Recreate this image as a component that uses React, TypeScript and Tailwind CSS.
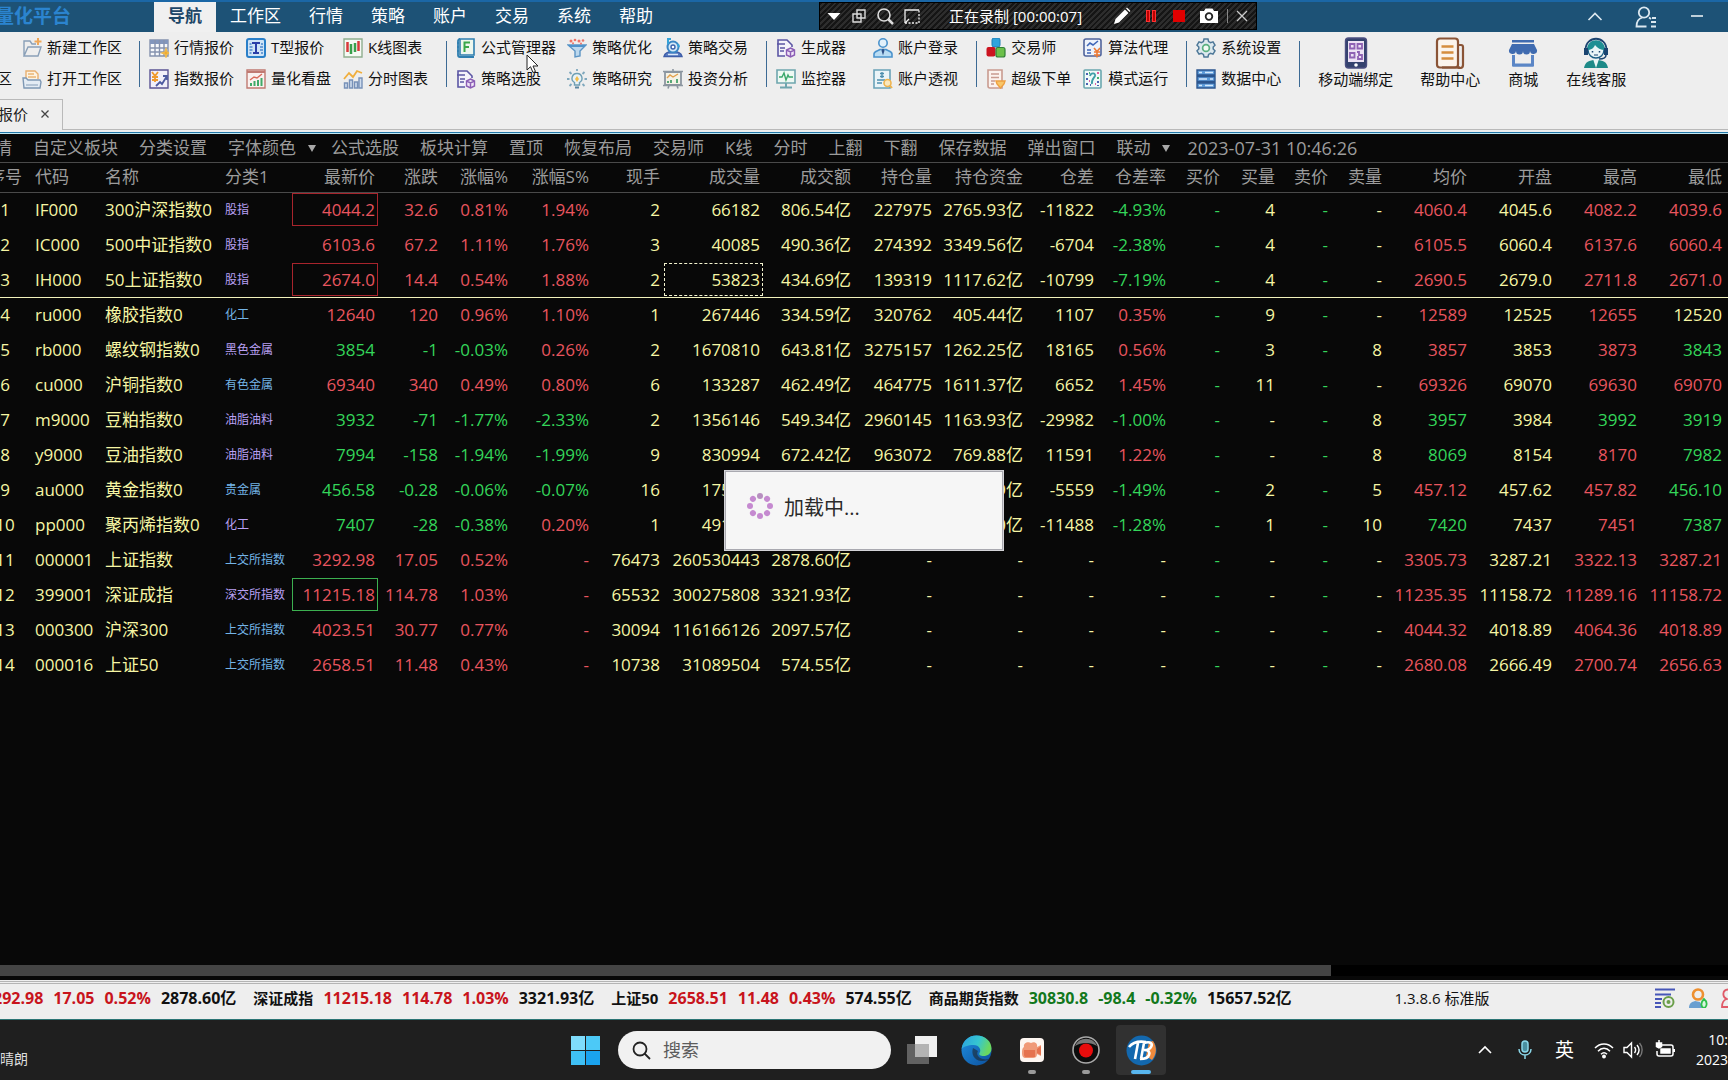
import type { ReactNode } from "react";

/* ---------- small drawings ---------- */

function Svg({ children, size = "h-5 w-5", box = "0 0 20 20" }: { children: ReactNode; size?: string; box?: string }) {
  return (
    <svg className={`${size} shrink-0`} viewBox={box} fill="none" strokeWidth={1.4} aria-hidden="true">
      {children}
    </svg>
  );
}

const icons: Record<string, ReactNode> = {
  newSpace: (
    <Svg>
      <path d="M2 18V3h6l2 3h4M2 18l4-9h13l-3 9z" stroke="#8aa0b8" />
      <path d="M16 0v7M12.500 3.500h7" stroke="#efa85a" strokeWidth={2} />
    </Svg>
  ),
  openSpace: (
    <Svg>
      <path d="M4 10V2h9l3 3v5" stroke="#e8b070" fill="#fdf3e2" />
      <path d="M6 5h6M6 8h8" stroke="#eab676" />
      <path d="M1 9h3l2 2h12l1 2-1 6H2z" stroke="#7e98b4" fill="#e4ecf4" />
      <path d="M4 16h12" stroke="#9fb3c8" />
    </Svg>
  ),
  quote: (
    <Svg>
      <path d="M1 2h18v16H1z" fill="#f7f9fc" stroke="#8592ae" />
      <path d="M1 2h18v4H1z" fill="#8296bd" />
      <path d="M1 10h18M1 14h18M6 2v16M10.500 2v16M15 2v16" stroke="#8592ae" />
      <path d="M17 11l1 3 2 1-2 1-1 3-1-3-3-1 3-1z" fill="#f0a422" stroke="#f0b94c" />
    </Svg>
  ),
  indexQuote: (
    <Svg>
      <path d="M1 1h18v18H1z" stroke="#5b5494" fill="#f1eff9" />
      <path d="M3 3l3 4 3-4M6 7v6M3 8h6M3 11h6" stroke="#f09a2c" strokeWidth={1.800} />
      <path d="M7 17l4-4 2 2 5-8M14 7h4v4" stroke="#4d5aa0" strokeWidth={1.800} />
    </Svg>
  ),
  tQuote: (
    <Svg>
      <rect x="1" y="1" width="18" height="18" rx="2" fill="#cfe3f6" stroke="#2a7fc8" strokeWidth={2} />
      <path d="M6 5h8M10 5v10M7 15h6" stroke="#2b3fa8" strokeWidth={2} />
      <path d="M3.500 6h2M3.500 9h3M3.500 12h3M3.500 15h2M14 9h3M14 12h3M15 6h2M15 15h2" stroke="#4e88cc" />
    </Svg>
  ),
  watch: (
    <Svg>
      <path d="M1 1h18v18H1z" stroke="#c07a72" fill="#f9f1ef" />
      <path d="M1 3h18" stroke="#c07a72" strokeWidth={2} />
      <path d="M5 17v-3M8.500 17v-5M12 17v-6M15.500 17V9" stroke="#3faa68" strokeWidth={2} />
      <path d="M4 11l4-3 3 1 5-4" stroke="#d96a5a" />
    </Svg>
  ),
  kline: (
    <Svg>
      <path d="M1 1h18v18H1z" stroke="#8fae8f" fill="#f6f9f4" />
      <path d="M4.500 4v10M15.500 3v10" stroke="#d8383a" strokeWidth={2.500} />
      <path d="M8 6v10M12 5v9" stroke="#39a04c" strokeWidth={2.500} />
    </Svg>
  ),
  timeChart: (
    <Svg>
      <path d="M1 10l5-6 4 4 4-6 5 2" stroke="#f0ae3c" strokeWidth={1.800} />
      <path d="M1.500 19v-5h3v5zM6.500 19v-8h3v8zM11.500 19v-6h3v6zM16 19V9h3v10z" fill="#cfdced" stroke="#7791b8" />
    </Svg>
  ),
  formula: (
    <Svg>
      <path d="M4 1h14v16H4z" fill="#eef7ee" stroke="#2f7fb0" strokeWidth={1.600} />
      <path d="M4 1a2 2 0 0 0-2 2v14a2 2 0 0 0 2 2h14" stroke="#2f7fb0" strokeWidth={1.800} />
      <path d="M1 5h2M1 9h2M1 13h2" stroke="#2f7fb0" />
      <path d="M8.500 14V4.500H14M8.500 9H13" stroke="#39a84b" strokeWidth={2} />
    </Svg>
  ),
  docCube: (
    <Svg>
      <path d="M9 18H2V2h9l5 5v2" stroke="#5b56a4" fill="#f3f2fa" strokeWidth={1.600} />
      <path d="M1 6h8M4 10h5M4 13h4" stroke="#5b56a4" />
      <path d="M14.500 10l4 2v5l-4 2-4-2v-5zM10.500 12l4 2 4-2M14.500 14v5" stroke="#8a5db5" fill="#efe4f7" />
    </Svg>
  ),
  funnel: (
    <Svg>
      <path d="M1 7h18l-6 6v5l-5 1v-6z" fill="#bcd8ee" stroke="#5c94c4" />
      <path d="M1 7h18l-2 2H3z" fill="#4f93cc" />
      <g fill="#ee7468">
        <circle cx="4" cy="3" r="1.500" /><circle cx="8" cy="2" r="1.300" /><circle cx="12" cy="3" r="1.500" />
        <circle cx="16" cy="2.500" r="1.300" /><circle cx="6" cy="5.300" r="1" /><circle cx="14" cy="5.500" r="1" />
      </g>
    </Svg>
  ),
  bulb: (
    <Svg>
      <path d="M10 4.500a4.800 4.800 0 0 0-2.500 9V16h5v-2.500A4.800 4.800 0 0 0 10 4.500z" fill="#e9f3f6" stroke="#6f9fb4" />
      <path d="M8 18.500h4" stroke="#5a86a0" strokeWidth={2} />
      <path d="M10 0v2M2.500 3l2 2M17.500 3l-2 2M0 10h2.500M17.500 10H20M2.500 17l2-2M17.500 17l-2-2" stroke="#7fa8bd" strokeWidth={1.800} />
      <path d="M10 7l2 3-2 3-2-3z" fill="#f2bd4c" />
    </Svg>
  ),
  robot: (
    <Svg>
      <path d="M1 18.500c1-4 5-5 9-5s8 1 9 5z" fill="#5b7fc4" stroke="#3e5da8" />
      <circle cx="10" cy="9" r="5.500" fill="#d6eaf8" stroke="#3a86c4" strokeWidth={2} />
      <circle cx="10" cy="9" r="2" stroke="#3b62ac" fill="#fff" />
      <path d="M5 6V1h3M15 6l1 3" stroke="#35a4d8" strokeWidth={2} />
      <path d="M5 16.500h10" stroke="#dce8f7" />
    </Svg>
  ),
  board: (
    <Svg>
      <path d="M2 3h16v13H2z" fill="#f4f2e6" stroke="#8c96a0" strokeWidth={1.800} />
      <path d="M0 2.500h20M0 16.500h20M5 19.500l1-3M15 19.500l-1-3M10 0v2" stroke="#8c96a0" strokeWidth={1.600} />
      <path d="M4 9l3-3 3 2 5-3" stroke="#e3a04c" />
      <path d="M5 14v-2M8 14v-3M14 14v-4" stroke="#58a878" strokeWidth={2} />
    </Svg>
  ),
  monitor: (
    <Svg>
      <path d="M1 1h18v13H1z" fill="#eef9f3" stroke="#6fa6ae" strokeWidth={1.600} />
      <path d="M3 8h3l2-4 2 7 2-5 1 2h4" stroke="#3aa86c" />
      <path d="M10 14v4M4 18.500h12" stroke="#6fa6ae" strokeWidth={2} />
    </Svg>
  ),
  login: (
    <Svg>
      <circle cx="10" cy="5" r="4.200" fill="#e2f0fa" stroke="#4a92cc" strokeWidth={1.600} />
      <path d="M1 19v-3c0-3 4-3 6-4.500h6c2 1.500 6 1.500 6 4.500v3z" fill="#b9dcf3" stroke="#4a92cc" strokeWidth={1.600} />
      <path d="M10 10.500l1.500 2-1.500 5-1.500-5z" fill="#2d4f86" />
    </Svg>
  ),
  perspective: (
    <Svg>
      <path d="M1 1h16v18H1z" fill="#eaf4f8" stroke="#6aa2b8" strokeWidth={1.600} />
      <path d="M9 3v6M7 4.500h4M7 7.500h4M4 11h8M4 14h5" stroke="#4d8fae" />
      <circle cx="14.500" cy="14" r="3.500" fill="#fbe8bd" stroke="#efb44e" strokeWidth={1.600} />
      <path d="M17 16.500l2 2.500" stroke="#efb44e" strokeWidth={2} />
    </Svg>
  ),
  trader: (
    <Svg>
      <rect x="6" y="0" width="8" height="9" rx="2" fill="#2fa3dc" stroke="#1f7fb5" strokeWidth={1} />
      <rect x="0.500" y="9" width="9" height="9.500" rx="2" fill="#cc1420" />
      <rect x="10" y="9.500" width="9" height="9.500" rx="2" fill="#6cc04a" stroke="#2f7f35" strokeWidth={1.200} />
    </Svg>
  ),
  superOrder: (
    <Svg>
      <path d="M2 1h14v18H4a2 2 0 0 1-2-2z" fill="#fbf2ee" stroke="#c99b90" strokeWidth={1.600} />
      <path d="M5 5h8M5 8.500h8M5 12h4M5 15h3" stroke="#c99b90" />
      <path d="M10 12h9l-1 3-3.500 4L11 15z" fill="#f7c66a" stroke="#ef9f3e" />
    </Svg>
  ),
  algo: (
    <Svg>
      <rect x="1" y="1" width="17" height="17" rx="2" fill="#eef3fb" stroke="#50649c" strokeWidth={1.600} />
      <path d="M4 8l3-3 3 2 5-4" stroke="#3f66b8" strokeWidth={1.600} />
      <path d="M4 12h4M4 15h4" stroke="#3f66b8" strokeWidth={1.600} />
      <path d="M11 10l3 3.500L17 10M14 13v6.500M11 14h6M11 17h6" stroke="#ee7b35" strokeWidth={1.600} />
    </Svg>
  ),
  modeRun: (
    <Svg>
      <rect x="1" y="1" width="17" height="18" rx="1" fill="#f0faf9" stroke="#6aa7ae" strokeWidth={1.600} />
      <path d="M7 7c1-4 6-3 5 0-1 2-4 4-3 8" stroke="#3f9fa8" strokeWidth={1.800} />
      <path d="M4 4v2M4 9v2M4 14v2M15 12v2M15 16v1M7 16h1" stroke="#4a62b0" strokeWidth={2} />
      <path d="M14 4h2M12 15h1M6 12h1" stroke="#e05fa0" strokeWidth={2} />
      <path d="M14 9h2M6 4h1" stroke="#46b070" strokeWidth={2} />
    </Svg>
  ),
  gear: (
    <Svg>
      <path
        d="M8 1h4l.6 2.600 2 1.100L17 3.800l2 3.400-1.800 1.800v2l1.800 1.800-2 3.400-2.400-.9-2 1.100L12 19H8l-.6-2.600-2-1.100-2.400.9-2-3.400L2.800 11V9L1 7.200l2-3.400 2.400.9 2-1.100z"
        fill="#dde9ee" stroke="#4e7898" strokeWidth={1.500}
      />
      <circle cx="10" cy="10" r="3.400" fill="#f3faf4" stroke="#5bb080" strokeWidth={1.700} />
    </Svg>
  ),
  server: (
    <Svg>
      <path d="M1 1h18v5H1zM1 7.500h18v5H1zM1 14h18v5H1z" fill="#5d9bd8" stroke="#2c568e" />
      <path d="M3 3.500h3M3 10h8M3 16.500h3M9 3.500h8M14 10h3M9 16.500h8" stroke="#d4e8fb" strokeWidth={1.400} />
    </Svg>
  ),
};

const bigIcons: Record<string, ReactNode> = {
  phone: (
    <Svg size="h-8 w-8" box="0 0 32 32">
      <rect x="5.500" y="1" width="21" height="30" rx="3" fill="#34426e" stroke="#4b4f80" />
      <path d="M8 4h16v21H8z" fill="#ece2f4" />
      <path d="M10 7h4.500v4.500H10zM17.500 7H22v4.500h-4.500zM10 16h4.500v4.500H10zM17 15h2v3h3v4h-4v-3" stroke="#8e62b4" strokeWidth={1.800} />
      <circle cx="16" cy="28" r="1.800" fill="#fff" />
    </Svg>
  ),
  help: (
    <Svg size="h-8 w-8" box="0 0 32 32">
      <path d="M24 8h3a2 2 0 0 1 2 2v18a3 3 0 0 1-6 0" stroke="#8a5436" strokeWidth={2.200} />
      <rect x="3" y="1.500" width="21" height="29" rx="3" fill="#fbf4ec" stroke="#8a5436" strokeWidth={2.200} />
      <path d="M7.500 9.500h12M7.500 15.500h12M7.500 21.500h12" stroke="#d58d3e" strokeWidth={2.400} />
      <path d="M26 30.500H8" stroke="#8a5436" strokeWidth={2.200} />
    </Svg>
  ),
  shop: (
    <Svg size="h-8 w-8" box="0 0 32 32">
      <path d="M5 3h22v2.500H5z" fill="#3f6bb0" />
      <path d="M5 7h22l3 6a3.500 3.500 0 0 1-7 1 3.500 3.500 0 0 1-7 0 3.500 3.500 0 0 1-7 0 3.500 3.500 0 0 1-7-1z" fill="#3f6bb0" />
      <path d="M6.500 18v10h19V18" stroke="#5b86c6" strokeWidth={3} />
      <path d="M6 28.500h20" stroke="#5b86c6" strokeWidth={2} />
    </Svg>
  ),
  service: (
    <Svg size="h-8 w-8" box="0 0 32 32">
      <path d="M4 31c1-6 5-8 12-8s11 2 12 8z" fill="#1d8a88" />
      <path d="M13 22l3 9 3-9z" fill="#e9f6f6" />
      <circle cx="16" cy="13" r="8" fill="#eaf5f7" stroke="#1c5f86" strokeWidth={1.400} />
      <path d="M7 13C7 0 25 0 25 13c-4 0-8-2-10-5-1 3-4 5-8 5z" fill="#1e8f94" />
      <path d="M5.500 13C5.500-2 26.500-2 26.500 13" stroke="#1b4470" strokeWidth={1.800} />
      <path d="M4 11h4v7H4zM24 11h4v7h-4z" fill="#1b4470" />
      <path d="M26 18c0 3-3 4-7 4" stroke="#1b4470" strokeWidth={1.500} />
      <path d="M12.500 14v1.500M19.500 14v1.500" stroke="#1b4470" strokeWidth={1.500} />
      <path d="M14 18h4" stroke="#1b4470" strokeWidth={1} />
    </Svg>
  ),
};

/* ---------- ribbon ---------- */

type Tool = [string, string];
const groups: { gap: string; cols: string; tools: Tool[] }[] = [
  {
    gap: "gap-x-3",
    cols: "grid-cols-[repeat(3,minmax(85px,auto))]",
    tools: [["quote", "行情报价"], ["tQuote", "T型报价"], ["kline", "K线图表"], ["indexQuote", "指数报价"], ["watch", "量化看盘"], ["timeChart", "分时图表"]],
  },
  {
    gap: "gap-x-[11px]",
    cols: "grid-cols-[repeat(3,minmax(85px,auto))]",
    tools: [["formula", "公式管理器"], ["funnel", "策略优化"], ["robot", "策略交易"], ["docCube", "策略选股"], ["bulb", "策略研究"], ["board", "投资分析"]],
  },
  {
    gap: "gap-x-3",
    cols: "grid-cols-[repeat(2,minmax(85px,auto))]",
    tools: [["docCube", "生成器"], ["login", "账户登录"], ["monitor", "监控器"], ["perspective", "账户透视"]],
  },
  {
    gap: "gap-x-3",
    cols: "grid-cols-[repeat(2,minmax(85px,auto))]",
    tools: [["trader", "交易师"], ["algo", "算法代理"], ["superOrder", "超级下单"], ["modeRun", "模式运行"]],
  },
  {
    gap: "gap-x-3",
    cols: "grid-cols-[minmax(85px,auto)]",
    tools: [["gear", "系统设置"], ["server", "数据中心"]],
  },
];

function ToolButton({ tool }: { tool: Tool }) {
  return (
    <button type="button" className="flex h-[31px] items-center gap-[5px] whitespace-nowrap text-[15px] leading-5 text-[#111]">
      {icons[tool[0]]}
      <span className="pb-0.5">{tool[1]}</span>
    </button>
  );
}

function Divider() {
  return <span className="mt-[9px] h-[46px] w-px shrink-0 bg-[#3c6a94]" />;
}

function Ribbon() {
  return (
    <div className="flex h-[67px] shrink-0 bg-[#eeeeee]">
      <div className="flex w-3 shrink-0 items-end justify-end pb-[11px]">
        <button type="button" className="shrink-0 text-[15px] leading-5 text-[#111]">区</button>
      </div>
      <div className="ml-2.5 flex flex-col pr-[17px]">
        <ToolButton tool={["newSpace", "新建工作区"]} />
        <ToolButton tool={["openSpace", "打开工作区"]} />
      </div>
      {groups.map((g, i) => (
        <div key={i} className="flex">
          <Divider />
          <div className={`grid content-start pl-[9px] pr-[18px] ${g.gap} ${g.cols}`}>
            {g.tools.map((t) => <ToolButton key={t[1]} tool={t} />)}
          </div>
        </div>
      ))}
      <Divider />
      <div className="flex gap-[27px] pl-[18px]">
        {[["phone", "移动端绑定"], ["help", "帮助中心"], ["shop", "商城"], ["service", "在线客服"]].map(([k, t]) => (
          <button key={k} type="button" className="flex flex-col items-center pt-[5px] text-[15px] leading-5 text-[#111]">
            {bigIcons[k]}
            {t}
          </button>
        ))}
      </div>
    </div>
  );
}

/* ---------- title bar ---------- */

function Recorder() {
  return (
    <div className="absolute left-[819px] top-0 flex h-7 w-[438px] items-center border border-black bg-[repeating-linear-gradient(135deg,#151515_0_2px,#2d2d2d_2px_4px)] pl-1.5 text-white">
      <div className="flex items-center gap-[9px]">
        <button type="button" aria-label="展开"><svg className="h-4 w-4" viewBox="0 0 16 16"><path d="M1.500 5h13L8 12z" fill="#fff" /></svg></button>
        <button type="button" aria-label="窗口"><svg className="h-4 w-4" viewBox="0 0 16 16" fill="none" stroke="#ddd" strokeWidth="1.400"><path d="M6 2h8v8H6zM2 6h8v8H2z" /></svg></button>
        <button type="button" aria-label="放大镜"><svg className="h-[18px] w-[18px]" viewBox="0 0 18 18" fill="none" stroke="#ddd" strokeWidth="1.600"><circle cx="8" cy="8" r="6" /><path d="M12.500 12.500L17 17" strokeWidth="2.500" /></svg></button>
        <button type="button" aria-label="选区"><svg className="h-[18px] w-[18px]" viewBox="0 0 18 18" fill="none" stroke="#eee" strokeWidth="1.300"><path d="M2 16V3h14" /><path d="M2 16h14V3" strokeDasharray="2 1.500" /><path d="M2 16l4-4" /></svg></button>
      </div>
      <span className="ml-7 whitespace-nowrap text-[15px] leading-6">正在录制 [00:00:07]</span>
      <div className="ml-auto flex items-center gap-3 pr-2">
        <button type="button" aria-label="画笔"><svg className="h-[18px] w-[18px]" viewBox="0 0 18 18"><path d="M1 17l1.500-5L12 2.500l3.500 3.500L6 15.500zM13 1.500l1-1 3.500 3.500-1 1z" fill="#fff" /></svg></button>
        <button type="button" aria-label="暂停" className="flex w-4 justify-center gap-0.5"><span className="h-3 w-1 border border-[#ff3030] bg-[#b00]" /><span className="h-3 w-1 border border-[#ff3030] bg-[#b00]" /></button>
        <button type="button" aria-label="停止" className="flex w-4 justify-center"><span className="h-3 w-3 bg-[#e00000]" /></button>
        <button type="button" aria-label="截图"><svg className="h-[18px] w-[20px]" viewBox="0 0 20 18"><path d="M1 4h4l1.500-2.500h7L15 4h4v12H1z" fill="#fff" /><circle cx="10" cy="9.500" r="3.300" fill="none" stroke="#222" strokeWidth="1.800" /></svg></button>
        <span className="-mx-1 h-3.5 w-px bg-[#888]" />
        <button type="button" aria-label="关闭"><svg className="h-3 w-3" viewBox="0 0 12 12" stroke="#ccc" strokeWidth="1.300"><path d="M1 1l10 10M11 1L1 11" /></svg></button>
      </div>
    </div>
  );
}

function TitleBar() {
  const menus = ["工作区", "行情", "策略", "账户", "交易", "系统", "帮助"];
  return (
    <header className="relative flex h-8 shrink-0 border-t-2 border-[#1b67a6] bg-[#1d5276]">
      <div className="flex w-[154px] shrink-0 items-center">
        <span className="-ml-[5px] pb-0.5 text-[19px] font-bold leading-7 text-[#2b84cf]">量化平台</span>
      </div>
      <nav className="flex text-[17px] leading-6 text-white">
        <button type="button" className="bg-[#f0f0f0] px-3.5 pb-[3px] font-bold text-[#1d4668]">导航</button>
        {menus.map((m) => (
          <button key={m} type="button" className="px-3.5 pb-[3px]">{m}</button>
        ))}
      </nav>
      <Recorder />
      <div className="ml-auto flex items-center gap-8 pr-[23px] text-white">
        <button type="button" aria-label="收起"><svg className="h-4 w-4" viewBox="0 0 16 16" fill="none" stroke="#dce8f0" strokeWidth="1.600"><path d="M1.500 11L8 4.500l6.500 6.500" /></svg></button>
        <button type="button" aria-label="用户">
          <svg className="h-[22px] w-[22px]" viewBox="0 0 22 22" fill="none" stroke="#dce8f0" strokeWidth="1.800"><circle cx="9" cy="6.500" r="5.200" /><path d="M11.500 20.500H1.500c0-5 2-8 6-9M14 11.500l2 1.500M16 16h5M16 20.500h5M17 12h4" /></svg>
        </button>
        <button type="button" aria-label="最小化"><svg className="h-4 w-4" viewBox="0 0 16 16" stroke="#e8f0f4" strokeWidth="1.600"><path d="M2 7h12" /></svg></button>
      </div>
    </header>
  );
}

function DocTabs() {
  return (
    <div className="flex h-[35px] shrink-0 flex-col bg-[#eeeeee]">
      <div className="flex h-[31px]">
        <div className="flex w-[63px] shrink-0 items-center justify-between border-r border-t border-[#b9b9b9] pb-0.5 pr-3">
          <button type="button" className="-ml-0.5 text-[15px] leading-5 text-[#222]">报价</button>
          <button type="button" aria-label="关闭标签"><svg className="h-2.5 w-2.5" viewBox="0 0 10 10" stroke="#444" strokeWidth="1.300"><path d="M1.500 1.500l7 7M8.500 1.500l-7 7" /></svg></button>
        </div>
        <div className="flex-1 border-b border-[#b9b9b9]" />
      </div>
      <div className="mt-0.5 h-px bg-[#2378a8]" />
      <div className="h-px bg-[#bfe8f4]" />
    </div>
  );
}

/* ---------- quote table ---------- */

function MarketBar() {
  const cls = "whitespace-nowrap";
  const mid = ["公式选股", "板块计算", "置顶", "恢复布局", "交易师", "K线", "分时", "上翻", "下翻", "保存数据", "弹出窗口"];
  const arrow = <svg className="h-2 w-2" viewBox="0 0 8 8"><path d="M0 1h8L4 8z" fill="#a8a8a8" /></svg>;
  return (
    <div className="flex h-[29px] shrink-0 items-center gap-[21px] border-b border-[#4a4a4a] pb-px text-[17px] leading-6 text-[#9c9c9c]">
      <button type="button" className="-ml-[5px]">情</button>
      <button type="button" className={cls}>自定义板块</button>
      <button type="button" className={cls}>分类设置</button>
      <button type="button" className="-mr-1.5 flex items-center gap-3 whitespace-nowrap">字体颜色{arrow}</button>
      {mid.map((m) => <button key={m} type="button" className={cls}>{m}</button>)}
      <button type="button" className="-mr-1 flex items-center gap-3 whitespace-nowrap">联动{arrow}</button>
      <time className="whitespace-nowrap text-lg leading-6">2023-07-31 10:46:26</time>
    </div>
  );
}

const heads = ["序号", "代码", "名称", "分类1", "最新价", "涨跌", "涨幅%", "涨幅S%", "现手", "成交量", "成交额", "持仓量", "持仓资金", "仓差", "仓差率", "买价", "买量", "卖价", "卖量", "均价", "开盘", "最高", "最低"];

const colWidths = ["w-[54px]", "w-[70px]", "w-[120px]", "w-[69px]", "w-[87px]", "w-[63px]", "w-[70px]", "w-[81px]", "w-[71px]", "w-[100px]", "w-[91px]", "w-[81px]", "w-[91px]", "w-[71px]", "w-[72px]", "w-[54px]", "w-[55px]", "w-[53px]", "w-[54px]", "w-[85px]", "w-[85px]", "w-[85px]", "w-[85px]"];

/* code | name | category colour + category | numeric cells, each led by its colour letter */
const rows = [
  "IF000|300沪深指数0|p股指|r4044.2|r32.6|r0.81%|r1.94%|y2|y66182|y806.54亿|y227975|y2765.93亿|y-11822|g-4.93%|g-|y4|g-|y-|r4060.4|y4045.6|r4082.2|r4039.6",
  "IC000|500中证指数0|p股指|r6103.6|r67.2|r1.11%|r1.76%|y3|y40085|y490.36亿|y274392|y3349.56亿|y-6704|g-2.38%|g-|y4|g-|y-|r6105.5|y6060.4|r6137.6|r6060.4",
  "IH000|50上证指数0|p股指|r2674.0|r14.4|r0.54%|r1.88%|y2|y53823|y434.69亿|y139319|y1117.62亿|y-10799|g-7.19%|g-|y4|g-|y-|r2690.5|y2679.0|r2711.8|r2671.0",
  "ru000|橡胶指数0|b化工|r12640|r120|r0.96%|r1.10%|y1|y267446|y334.59亿|y320762|y405.44亿|y1107|r0.35%|g-|y9|g-|y-|r12589|y12525|r12655|y12520",
  "rb000|螺纹钢指数0|p黑色金属|g3854|g-1|g-0.03%|r0.26%|y2|y1670810|y643.81亿|y3275157|y1262.25亿|y18165|r0.56%|g-|y3|g-|y8|r3857|y3853|r3873|g3843",
  "cu000|沪铜指数0|b有色金属|r69340|r340|r0.49%|r0.80%|y6|y133287|y462.49亿|y464775|y1611.37亿|y6652|r1.45%|g-|y11|g-|y-|r69326|y69070|r69630|r69070",
  "m9000|豆粕指数0|p油脂油料|g3932|g-71|g-1.77%|g-2.33%|y2|y1356146|y549.34亿|y2960145|y1163.93亿|y-29982|g-1.00%|g-|y-|g-|y8|g3957|y3984|g3992|g3919",
  "y9000|豆油指数0|p油脂油料|g7994|g-158|g-1.94%|g-1.99%|y9|y830994|y672.42亿|y963072|y769.88亿|y11591|r1.22%|g-|y-|g-|y8|g8069|y8154|r8170|g7982",
  "au000|黄金指数0|b贵金属|g456.58|g-0.28|g-0.06%|g-0.07%|y16|y175204|y801.36亿|y372156|y1699.19亿|y-5559|g-1.49%|g-|y2|g-|y5|r457.12|y457.62|r457.82|g456.10",
  "pp000|聚丙烯指数0|p化工|g7407|g-28|g-0.38%|r0.20%|y1|y491338|y182.30亿|y887041|y328.50亿|y-11488|g-1.28%|g-|y1|g-|y10|g7420|y7437|r7451|g7387",
  "000001|上证指数|b上交所指数|r3292.98|r17.05|r0.52%|r-|y76473|y260530443|y2878.60亿|y-|y-|y-|y-|g-|y-|g-|y-|r3305.73|y3287.21|r3322.13|r3287.21",
  "399001|深证成指|p深交所指数|r11215.18|r114.78|r1.03%|r-|y65532|y300275808|y3321.93亿|y-|y-|y-|y-|g-|y-|g-|y-|r11235.35|y11158.72|r11289.16|r11158.72",
  "000300|沪深300|b上交所指数|r4023.51|r30.77|r0.77%|r-|y30094|y116166126|y2097.57亿|y-|y-|y-|y-|g-|y-|g-|y-|r4044.32|y4018.89|r4064.36|r4018.89",
  "000016|上证50|b上交所指数|r2658.51|r11.48|r0.43%|r-|y10738|y31089504|y574.55亿|y-|y-|y-|y-|g-|y-|g-|y-|r2680.08|y2666.49|r2700.74|r2656.63",
].map((r) => r.split("|"));

const tone: Record<string, string> = {
  r: "text-[#e8555f]",
  g: "text-[#34d65a]",
  y: "text-[#f6f6a4]",
  p: "text-[#b9a0f4]",
  b: "text-[#74b4e6]",
};

function frame(row: number, col: number) {
  if (col === 3 && (row === 0 || row === 2)) return "border-[#a8242c]";
  if (col === 3 && row === 11) return "border-[#3cb050]";
  if (col === 8 && row === 2) return "border-dashed border-[#f4f4d0]";
  return "border-transparent";
}

function QuoteTable() {
  return (
    <table className="-ml-[22px] w-[calc(100%+22px)] table-fixed border-collapse whitespace-nowrap text-[17px]">
      <colgroup>
        {colWidths.map((w, i) => <col key={i} className={w} />)}
        <col />
      </colgroup>
      <thead>
        <tr className="h-[29px] border-b border-[#4a4a4a] leading-6 text-[#9c9c9c]">
          {heads.map((h, i) => (
            <th key={h} scope="col" className={`p-0 font-normal ${i === 0 ? "text-center" : i < 4 ? "pl-[3px] text-left" : "pr-[3px] text-right"}`}>{h}</th>
          ))}
          <td />
        </tr>
      </thead>
      <tbody>
        {rows.map((r, ri) => (
          <tr key={r[0]} className={`h-[35px] ${ri === 2 ? "border-b border-[#f2f2bc]" : ""}`}>
            <td className="p-0 text-center text-[#f6f6a4]">{ri + 1}</td>
            {r.map((c, ci) =>
              ci < 2 ? (
                <td key={ci} className="p-0 pl-[3px] text-[#f6f6a4]">{c}</td>
              ) : ci === 2 ? (
                <td key={ci} className={`p-0 pl-[3px] pt-px text-xs ${tone[c[0]]}`}>{c.slice(1)}</td>
              ) : (
                <td key={ci} className={`p-0 ${tone[c[0]]}`}>
                  <div className={`ml-px h-[33px] border pr-0.5 text-right leading-[31px] ${frame(ri, ci)}`}>{c.slice(1)}</div>
                </td>
              ),
            )}
            <td />
          </tr>
        ))}
      </tbody>
    </table>
  );
}

function LoadingDialog() {
  const dots = [0, 45, 90, 135, 180, 225, 270, 315];
  return (
    <div role="dialog" aria-label="加载中" className="absolute left-[724px] top-[470px] flex h-[81px] w-[280px] items-center border-2 border-[#a9a9b0] bg-[#f6f6f6] pb-1.5 pl-[18px] outline-1 outline-[#d4d4d8] -outline-offset-1">
      <svg className="mb-1 h-8 w-8" viewBox="-16 -16 32 32">
        {dots.map((a) => (
          <circle key={a} cx="0" cy="-10" r="3" fill={a === 0 ? "#b78fc0" : "#c58ad0"} transform={`rotate(${a})`} />
        ))}
      </svg>
      <span className="ml-2 text-xl text-[#2a2a2a]">加载中...</span>
    </div>
  );
}

/* ---------- status bar ---------- */

function StatusBar() {
  const R = "text-[#c8141c]";
  const G = "text-[#12781c]";
  const list: { name: string; color: string; v: string[]; amt: string }[] = [
    { name: "", color: R, v: ["292.98", "17.05", "0.52%"], amt: "2878.60亿" },
    { name: "深证成指", color: R, v: ["11215.18", "114.78", "1.03%"], amt: "3321.93亿" },
    { name: "上证50", color: R, v: ["2658.51", "11.48", "0.43%"], amt: "574.55亿" },
    { name: "商品期货指数", color: G, v: ["30830.8", "-98.4", "-0.32%"], amt: "15657.52亿" },
  ];
  return (
    <footer className="flex h-10 shrink-0 flex-col border-b border-[#2c7474] bg-[#eeeeee]">
      <div className="mt-px h-[3px] border-y border-[#b4b4b4]" />
      <div className="flex flex-1 items-center gap-[17px] whitespace-nowrap pb-[7px] text-base font-bold leading-5 text-[#111]">
        {list.map((s, i) => (
          <div key={i} className={`flex items-baseline gap-2.5 ${i === 0 ? "-ml-[7px]" : ""}`}>
            {s.name && <span className="text-[15px] leading-5">{s.name}</span>}
            {s.v.map((v) => <span key={v} className={s.color}>{v}</span>)}
            <span>{s.amt}</span>
          </div>
        ))}
        <span className="ml-[86px] text-[15px] font-normal leading-5">1.3.8.6 标准版</span>
        <div className="ml-auto flex gap-[13px]">
          <svg className="h-5 w-5" viewBox="0 0 20 20" fill="none"><path d="M0 1.500h20M0 6.500h16M0 11h7M0 15h6M0 19h6" stroke="#4656b8" strokeWidth="2" /><circle cx="13.500" cy="14" r="5" stroke="#6a9f4a" strokeWidth="2" /><circle cx="13.500" cy="14" r="2" fill="#6a9f4a" /></svg>
          <svg className="h-5 w-5" viewBox="0 0 20 20" fill="none"><path d="M1 20c0-5 3-6 6-7l5 1 3 6z" fill="#6a9fd0" /><circle cx="10" cy="6.500" r="5" stroke="#ee9030" strokeWidth="2.600" /><path d="M16 11c4 3 3 8 0 9-3-1-4-5 0-9z" fill="#d9f5e0" stroke="#2fc04c" strokeWidth="1.800" /></svg>
          <svg className="h-5 w-[7px]" viewBox="0 0 7 20" fill="none"><path d="M7 1.500C1 2 1 9 6 11 2 12 1 15 1 19h6" stroke="#e05a68" strokeWidth="1.800" /></svg>
        </div>
      </div>
    </footer>
  );
}

/* ---------- desktop task bar ---------- */

function TaskBar() {
  return (
    <div className="flex h-[60px] shrink-0 items-center bg-[#1f1f1f] text-white">
      <span className="w-[571px] shrink-0 pt-[18px] text-sm leading-5 text-[#ddd]">晴朗</span>
      <button type="button" aria-label="开始" className="grid h-[29px] w-[29px] shrink-0 grid-cols-2 gap-px">
        <span className="bg-[#7fdcfb]" /><span className="bg-[#4cc9f7]" /><span className="bg-[#3fc0f5]" /><span className="bg-[#1aa3ee]" />
      </button>
      <label className="ml-[18px] flex h-[38px] w-[273px] shrink-0 items-center gap-3 rounded-full bg-[#f1f1f1] pl-3.5">
        <svg className="h-[19px] w-[19px] shrink-0" viewBox="0 0 19 19" fill="none" stroke="#222" strokeWidth="1.800"><circle cx="8" cy="8" r="6.500" /><path d="M12.500 12.500L18 18" /></svg>
        <input type="text" aria-label="搜索" placeholder="搜索" className="w-full bg-transparent text-lg leading-6 outline-none placeholder:text-[#5c5c5c]" />
      </label>
      <button type="button" aria-label="任务视图" className="ml-4 shrink-0">
        <svg className="h-[30px] w-[30px]" viewBox="0 0 30 30"><path d="M8 1h22v21H8z" fill="#f0f0f0" /><path d="M0 9h22v20H0z" fill="#6e6e6e" fillOpacity=".85" /><path d="M8 9h14v13H8z" fill="#b4b4b4" /></svg>
      </button>
      <button type="button" aria-label="浏览器" className="ml-6 shrink-0">
        <svg className="h-[31px] w-[31px]" viewBox="0 0 31 31">
          <defs>
            <linearGradient id="edgeTop" x1="0" y1="0" x2="1" y2="0.300"><stop offset="0" stopColor="#2a9fe0" /><stop offset=".6" stopColor="#36c6d0" /><stop offset="1" stopColor="#6ad860" /></linearGradient>
            <linearGradient id="edgeLow" x1="0" y1="0" x2="1" y2="1"><stop offset="0" stopColor="#1f8fe0" /><stop offset="1" stopColor="#0c4f9c" /></linearGradient>
          </defs>
          <circle cx="15.500" cy="15.500" r="15" fill="url(#edgeLow)" />
          <path d="M.6 14C2 5 8 .5 15.500.5c9 0 15 6 15 13 0 5-4 7.500-8 7.500-3 0-5-1-4-3 2-3 0-8-6-8C7 10 2 12 .6 14z" fill="url(#edgeTop)" />
          <path d="M12 13c-2 6 1 12 8 13 4 .5 7-1 9-3-1 1-4 2-7 1-5-1-7-5-5-8z" fill="#1f1f1f" fillOpacity=".55" />
        </svg>
      </button>
      <button type="button" aria-label="录像" className="ml-7 flex h-full w-6 shrink-0 flex-col items-center justify-end pb-1.5">
        <svg className="mb-2 h-6 w-6" viewBox="0 0 24 24"><rect width="24" height="24" rx="4" fill="#fdf6f1" /><path d="M4 9c-1-4 4-6 7-4 4-2 7 1 6 4l4-2v11l-4-2c0 3-2 4-4 4H6c-3 0-4-2-4-5 0-2 0-5 2-6z" fill="#f09a78" /><path d="M4 12h11v7H6c-2 0-2-2-2-3zM17 11l4-3v9l-4-2z" fill="#e5734f" /></svg>
        <span className="h-1 w-2 rounded-full bg-[#9a9a9a]" />
      </button>
      <button type="button" aria-label="录制" className="ml-7 flex h-full w-7 shrink-0 flex-col items-center justify-end pb-1.5">
        <svg className="mb-1.5 h-7 w-7" viewBox="0 0 28 28"><circle cx="14" cy="14" r="13" fill="#0c0c0c" stroke="#a8a8a8" strokeWidth="1.600" /><path d="M3 10a12 12 0 0 1 22 0c-6-4-16-4-22 0z" fill="#777" /><circle cx="14" cy="14.500" r="7" fill="#e80c0c" /></svg>
        <span className="h-1 w-2 rounded-full bg-[#9a9a9a]" />
      </button>
      <button type="button" aria-label="交易平台" className="ml-4 flex h-[50px] w-[50px] shrink-0 flex-col items-center justify-end rounded bg-[#313131] pb-px">
        <svg className="mb-1 h-[31px] w-[31px]" viewBox="0 0 31 31" fill="none">
          <circle cx="15.500" cy="15.500" r="15" fill="#1368ae" />
          <path d="M27 6c4 6 4 13-1 19l-6-4 3-14z" fill="#f08a3c" />
          <path d="M3 12C7 7 14 6 20 7M12 8L9 24M18 8l-3 16M18 8c7-2 9 1 7 4-1 2-4 3-7 3 5 0 6 2 5 5-1 3-5 4-9 4" stroke="#fff" strokeWidth="2.600" />
        </svg>
        <span className="h-1 w-5 rounded-full bg-[#58b6ee]" />
      </button>
      <div className="ml-auto flex shrink-0 items-center">
        <svg className="h-4 w-4" viewBox="0 0 16 16" fill="none" stroke="#fff" strokeWidth="1.600"><path d="M2 11l6-6 6 6" /></svg>
        <svg className="ml-6 h-5 w-4" viewBox="0 0 16 20" fill="none" stroke="#8cd8ea" strokeWidth="1.500"><rect x="5" y="1" width="6" height="11" rx="3" fill="#4a8fa0" /><path d="M2 9c0 8 12 8 12 0M8 15v4" /></svg>
        <span className="ml-[22px] text-[19px] leading-6">英</span>
        <svg className="ml-5 h-5 w-5" viewBox="0 0 20 20" fill="none" stroke="#fff" strokeWidth="1.500"><path d="M1 8c5-5.500 13-5.500 18 0M4 11.200c3.500-3.800 8.500-3.800 12 0M7 14.200c2-2 4-2 6 0" /><circle cx="10" cy="16.500" r="1.200" fill="#fff" /></svg>
        <svg className="ml-[9px] h-5 w-5" viewBox="0 0 20 20" fill="none" stroke="#fff" strokeWidth="1.400"><path d="M1 7.500h3L8.500 3v14L4 12.500H1z" /><path d="M11.500 7c1.500 2 1.500 4 0 6M14 5c2.500 3 2.500 7 0 10" /><path d="M16.500 3c3.500 4 3.500 10 0 14" stroke="#777" /></svg>
        <svg className="ml-3 h-5 w-5" viewBox="0 0 20 20" fill="none" stroke="#fff" strokeWidth="1.500"><path d="M7 5h9a2 2 0 0 1 2 2v7a2 2 0 0 1-2 2H4a2 2 0 0 1-2-2v-3M19.300 9v3" /><path d="M6 9h9v4H6z" fill="#fff" /><path d="M4 0v3M1.500 3h5v3.500L4 8 1.500 6.500z" fill="#fff" /></svg>
        <div className="ml-[21px] w-8 text-right text-sm leading-5">
          <div>10:</div>
          <div>2023</div>
        </div>
      </div>
    </div>
  );
}

export default function App() {
  return (
    <div className="relative flex min-h-screen w-full flex-col overflow-hidden bg-[#eeeeee] font-['Open_Sans','Noto_Sans_CJK_SC',sans-serif]">
      <TitleBar />
      <Ribbon />
      <DocTabs />
      <main className="flex flex-1 flex-col bg-[#080808]">
        <MarketBar />
        <QuoteTable />
        <div className="mb-1 mt-auto h-[11px] bg-black">
          <div className="h-full w-[77%] bg-[#444]" />
        </div>
      </main>
      <StatusBar />
      <TaskBar />
      <LoadingDialog />
      <svg className="absolute left-[526px] top-[54px] h-5 w-3.5" viewBox="0 0 14 20" aria-hidden="true">
        <path d="M1 1v15l3.500-3.300L7 18.500l2.500-1L7 12h5z" fill="#fff" stroke="#222" />
      </svg>
    </div>
  );
}
